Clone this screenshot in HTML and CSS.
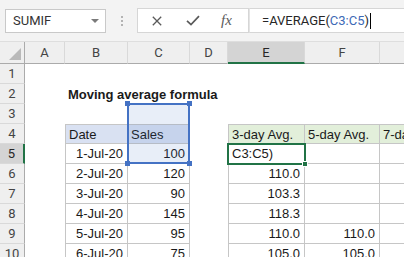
FILE: index.html
```html
<!DOCTYPE html>
<html>
<head>
<meta charset="utf-8">
<link rel="stylesheet" href="styles.css">
</head>
<body>
<div class="toolbar">
  <div class="namebox"><span class="nb-text">SUMIF</span><span class="nb-arrow"></span></div>
  <div class="grip"><span></span><span></span><span></span></div>
  <div class="fxbox">
    <svg class="ico-x" width="10" height="10" viewBox="0 0 10 10"><path d="M0.8 0.8 L9.2 9.2 M9.2 0.8 L0.8 9.2" stroke="#5a5a5a" stroke-width="1.3" fill="none"/></svg>
    <svg class="ico-check" width="14" height="11" viewBox="0 0 14 11"><path d="M1 5.8 L5 9.6 L13 1.2" stroke="#5a5a5a" stroke-width="1.7" fill="none"/></svg>
    <span class="fx">fx</span>
  </div>
  <div class="formula">=AVERAGE(<span class="ref">C3:C5</span>)<span class="caret"></span></div>
</div>
<div class="sheet">
  <div class="corner"><span class="tri"></span></div>
  <div class="ch">A</div><div class="ch">B</div><div class="ch">C</div><div class="ch">D</div><div class="ch sel">E</div><div class="ch">F</div><div class="ch">G</div>

  <div class="rh">1</div>
  <div class="c"></div><div class="c"></div><div class="c"></div><div class="c"></div><div class="c"></div><div class="c"></div><div class="c"></div>

  <div class="rh">2</div>
  <div class="c"></div><div class="c title">Moving average formula</div><div class="c"></div><div class="c"></div><div class="c"></div><div class="c"></div><div class="c"></div>

  <div class="rh">3</div>
  <div class="c"></div><div class="c"></div><div class="c c3"><div class="range"><i class="h tl-h"></i><i class="h tr-h"></i><i class="h bl-h"></i><i class="h br-h"></i></div></div><div class="c"></div><div class="c"></div><div class="c"></div><div class="c"></div>

  <div class="rh">4</div>
  <div class="c"></div>
  <div class="c t tl tt bh">Date</div>
  <div class="c t tt bh">Sales</div>
  <div class="c"></div>
  <div class="c t tl tt gh">3-day Avg.</div>
  <div class="c t tt gh">5-day Avg.</div>
  <div class="c t tt gh">7-day Avg.</div>

  <div class="rh sel">5</div>
  <div class="c"></div>
  <div class="c t tl num">1-Jul-20</div>
  <div class="c t num">100</div>
  <div class="c"></div>
  <div class="c t tl active">C3:C5)</div>
  <div class="c t"></div>
  <div class="c t"></div>

  <div class="rh">6</div>
  <div class="c"></div>
  <div class="c t tl num">2-Jul-20</div>
  <div class="c t num">120</div>
  <div class="c"></div>
  <div class="c t tl num">110.0</div>
  <div class="c t"></div>
  <div class="c t"></div>

  <div class="rh">7</div>
  <div class="c"></div>
  <div class="c t tl num">3-Jul-20</div>
  <div class="c t num">90</div>
  <div class="c"></div>
  <div class="c t tl num">103.3</div>
  <div class="c t"></div>
  <div class="c t"></div>

  <div class="rh">8</div>
  <div class="c"></div>
  <div class="c t tl num">4-Jul-20</div>
  <div class="c t num">145</div>
  <div class="c"></div>
  <div class="c t tl num">118.3</div>
  <div class="c t"></div>
  <div class="c t"></div>

  <div class="rh">9</div>
  <div class="c"></div>
  <div class="c t tl num">5-Jul-20</div>
  <div class="c t num">95</div>
  <div class="c"></div>
  <div class="c t tl num">110.0</div>
  <div class="c t num">110.0</div>
  <div class="c t"></div>

  <div class="rh">10</div>
  <div class="c"></div>
  <div class="c t tl num">6-Jul-20</div>
  <div class="c t num">75</div>
  <div class="c"></div>
  <div class="c t tl num">105.0</div>
  <div class="c t num">105.0</div>
  <div class="c t"></div>
</div>
</body>
</html>
```
FILE: styles.css
```css
html, body {
  margin: 0;
  padding: 0;
}
body {
  width: 404px;
  height: 257px;
  overflow: hidden;
  background: #ffffff;
  font-family: "Liberation Sans", Arial, sans-serif;
}

/* ---------- formula toolbar ---------- */
.toolbar {
  display: flex;
  align-items: center;
  box-sizing: border-box;
  height: 42px;
  width: 520px;
  padding-left: 5px;
  background: #f3f3f3;
  border-bottom: 1px solid #dedede;
}
.namebox {
  box-sizing: border-box;
  flex: none;
  width: 101px;
  height: 24px;
  display: flex;
  align-items: center;
  justify-content: space-between;
  padding: 0 6px 0 7px;
  background: #ffffff;
  border: 1px solid #c9c9c9;
  font-family: Roboto, "Liberation Sans", sans-serif;
  font-size: 13px;
  color: #333333;
}
.nb-arrow {
  width: 0;
  height: 0;
  border-left: 4px solid transparent;
  border-right: 4px solid transparent;
  border-top: 4px solid #7a7a7a;
}
.grip {
  flex: none;
  display: flex;
  flex-direction: column;
  gap: 2px;
  margin-left: 15px;
}
.grip span {
  display: block;
  width: 2px;
  height: 2px;
  background: #b3b3b3;
}
.fxbox {
  box-sizing: border-box;
  flex: none;
  display: flex;
  align-items: center;
  width: 112px;
  height: 25px;
  margin-left: 14px;
  background: #ffffff;
  border: 1px solid #d6d6d6;
}
.ico-x {
  margin-left: 14px;
}
.ico-check {
  margin-left: 24px;
}
.fx {
  margin-left: 21px;
  font-family: "Liberation Serif", serif;
  font-style: italic;
  font-size: 15px;
  color: #5a5a5a;
}
.formula {
  box-sizing: border-box;
  flex: none;
  display: flex;
  align-items: center;
  width: 200px;
  height: 25px;
  padding-left: 12px;
  background: #ffffff;
  border: 1px solid #d6d6d6;
  border-left-color: #e4e4e4;
  font-family: Roboto, "Liberation Sans", sans-serif;
  font-size: 13px;
  color: #262626;
  white-space: nowrap;
}
.ref {
  color: #3d6ab6;
}
.caret {
  display: inline-block;
  width: 1px;
  height: 16px;
  margin-left: 1px;
  background: #000000;
}

/* ---------- sheet grid ---------- */
.sheet {
  display: grid;
  grid-template-columns: 25px 40px 63px 62px 38px 77px 75px 75px;
  grid-template-rows: 22px repeat(10, 20px);
  font-size: 13px;
  color: #1a1a1a;
}
.corner {
  box-sizing: border-box;
  display: flex;
  justify-content: flex-end;
  align-items: flex-end;
  padding: 0 3px 3px 0;
  background: #efefef;
  border-right: 1px solid #ababab;
  border-bottom: 1px solid #ababab;
}
.tri {
  width: 0;
  height: 0;
  border-left: 12px solid transparent;
  border-bottom: 12px solid #b9b9b9;
}
.ch, .rh {
  box-sizing: border-box;
  display: flex;
  align-items: center;
  justify-content: center;
  background: #efefef;
  font-family: Roboto, "Liberation Sans", sans-serif;
  font-size: 13px;
  color: #444444;
}
.ch {
  border-right: 1px solid #d9d9d9;
  border-bottom: 1px solid #ababab;
}
.ch.sel {
  background: #d4d4d4;
  border-bottom: 2px solid #217346;
  color: #262626;
}
.rh {
  border-right: 1px solid #ababab;
  border-bottom: 1px solid #d9d9d9;
}
.rh.sel {
  background: #d4d4d4;
  border-right: 2px solid #217346;
  color: #262626;
}
.c {
  box-sizing: border-box;
  display: flex;
  align-items: center;
  padding: 0 3px;
  white-space: nowrap;
}
.title {
  font-weight: bold;
}
.num {
  justify-content: flex-end;
  padding-right: 4px;
}
.t {
  border-right: 1px solid #c6c6c6;
  border-bottom: 1px solid #c6c6c6;
}
.tl {
  border-left: 1px solid #c6c6c6;
}
.tt {
  border-top: 1px solid #c6c6c6;
}
.bh {
  background: #d9e1f2;
}
.gh {
  background: #e2efda;
}

/* referenced range overlay (C3:C5) */
.c3 {
  position: relative;
}
.range {
  position: absolute;
  left: -1px;
  top: -1px;
  width: 63px;
  height: 61px;
  box-sizing: border-box;
  border: 2px solid #4472c4;
  background: rgba(68, 114, 196, 0.12);
  z-index: 2;
}
.h {
  position: absolute;
  width: 5px;
  height: 5px;
  background: #4472c4;
}
.tl-h { left: -4px; top: -4px; }
.tr-h { right: -4px; top: -4px; }
.bl-h { left: -4px; bottom: -4px; }
.br-h { right: -4px; bottom: -4px; }

/* active cell E5 */
.active {
  position: relative;
}
.active::before {
  content: "";
  position: absolute;
  left: -2px;
  top: -1px;
  right: -2px;
  bottom: -2px;
  border: 2px solid #217346;
}
.active::after {
  content: "";
  position: absolute;
  right: -4px;
  bottom: -4px;
  width: 4px;
  height: 4px;
  background: #217346;
  border: 1px solid #ffffff;
}
```
